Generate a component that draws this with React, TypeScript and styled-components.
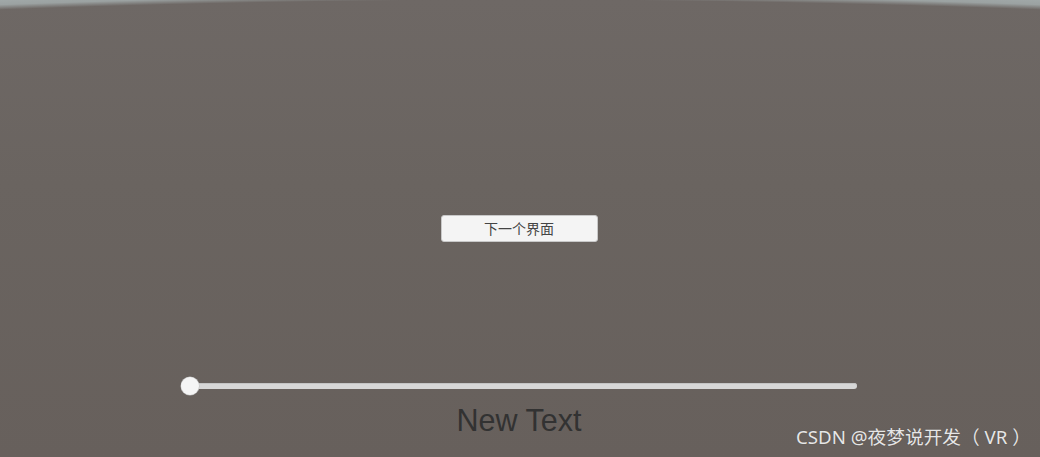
import React from "react";
import styled, { createGlobalStyle } from "styled-components";

const GlobalStyle = createGlobalStyle`
  html, body {
    margin: 0;
    padding: 0;
    width: 1040px;
    height: 457px;
    overflow: hidden;
    background: #6a635f;
  }
`;

const Screen = styled.div`
  position: relative;
  width: 1040px;
  height: 457px;
  display: flex;
  flex-direction: column;
  align-items: center;
  padding-top: 215px;
  box-sizing: border-box;
  background:
    radial-gradient(circle 13875px at 520px 13873px, rgba(0,0,0,0) 13873px, rgba(160,168,168,0.9) 13878px, #a3abab 13885px),
    linear-gradient(180deg, #6e6865 0%, #6a6460 40%, #67605c 100%);
  font-family: "Liberation Sans", Arial, sans-serif;
`;

const NextButton = styled.button`
  width: 157px;
  height: 27px;
  margin: 0 2px 0 0;
  padding: 0;
  border: 1px solid #c8c8c8;
  border-radius: 3px;
  background: #f4f4f4;
  color: #444444;
  font-family: "Noto Sans CJK SC", "Liberation Sans", sans-serif;
  font-size: 14px;
  line-height: 25px;
  text-align: center;
  box-sizing: border-box;
  cursor: pointer;
`;

const SliderRow = styled.div`
  position: relative;
  align-self: flex-start;
  margin-left: 181px;
  margin-top: 135px;
  width: 676px;
  height: 18px;
  display: flex;
  align-items: center;
`;

const Track = styled.div`
  margin-left: 9px;
  flex: 1;
  height: 6px;
  border-radius: 3px;
  background: #d7d7d7;
  box-shadow: inset 0 1px 0 #c4c4c4;
`;

const Handle = styled.div`
  position: absolute;
  left: 0;
  top: 0;
  width: 18px;
  height: 18px;
  border-radius: 50%;
  background: #f5f5f5;
  box-shadow: 0 0 0 0.5px #bdbdbd;
`;

const Caption = styled.div`
  margin-top: 9px;
  margin-right: 2px;
  font-family: "Liberation Sans", Arial, sans-serif;
  font-size: 30.5px;
  line-height: 33px;
  color: #323232;
`;

const Watermark = styled.div`
  position: absolute;
  right: 9px;
  bottom: 8px;
  font-family: "Noto Sans", "Noto Sans CJK SC", sans-serif;
  font-size: 18.7px;
  line-height: 24px;
  color: #e6e6e6;
  text-shadow: 0 0 1px rgba(0, 0, 0, 0.25);
  white-space: nowrap;
`;

export default function App() {
  return (
    <>
      <GlobalStyle />
      <Screen>
        <NextButton>下一个界面</NextButton>
        <SliderRow>
          <Track />
          <Handle />
        </SliderRow>
        <Caption>New Text</Caption>
        <Watermark>CSDN @夜梦说开发（ VR ）</Watermark>
      </Screen>
    </>
  );
}
